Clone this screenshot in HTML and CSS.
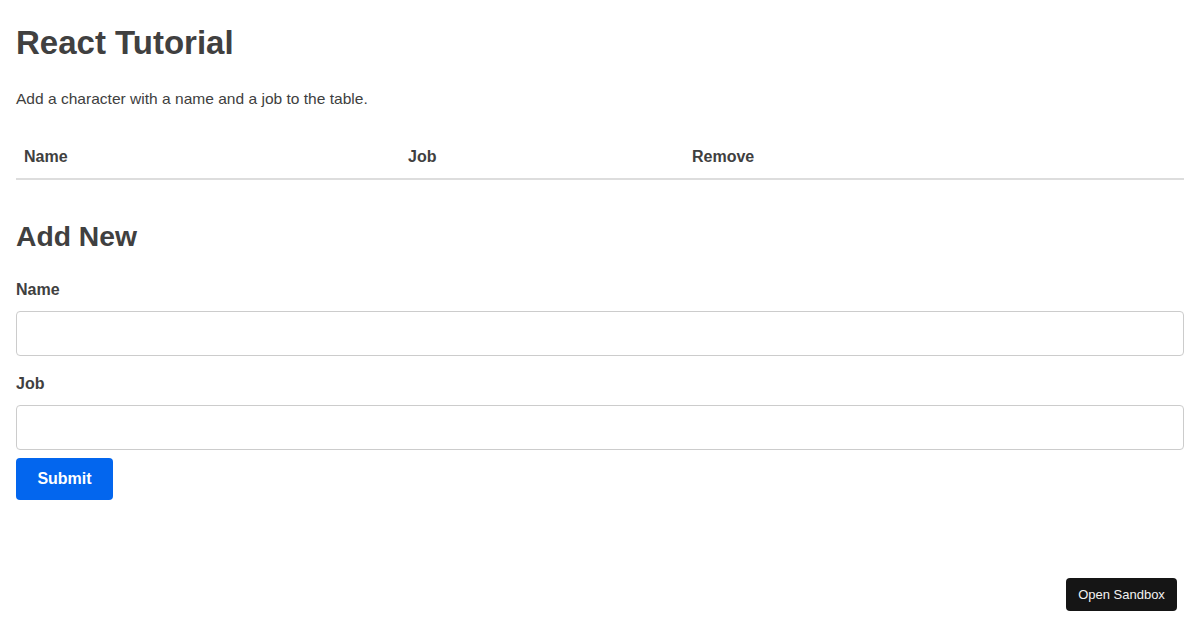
FILE: index.html
```html
<!DOCTYPE html>
<html lang="en">
<head>
    <meta charset="UTF-8">
    <title>React Tutorial</title>
    <meta name="viewport" content="width=device-width, initial-scale=1.0">
    <link rel="stylesheet" href="styles.css">
</head>
<body>
<div class="container">
    <h1>React Tutorial</h1>
    <p>Add a character with a name and a job to the table.</p>
    <table>
        <thead>
        <tr>
            <th class="col-name">Name</th>
            <th class="col-job">Job</th>
            <th class="col-remove">Remove</th>
        </tr>
        </thead>
        <tbody></tbody>
    </table>

    <h2>Add New</h2>
    <form id="characterForm">
        <label for="name">Name</label>
        <input type="text" id="name" name="name" />
        <label for="job">Job</label>
        <input type="text" id="job" name="job" class="last-field" />
        <input type="submit" value="Submit" />
    </form>
</div>

<button class="sandbox-link">Open Sandbox</button>
</body>
</html>
```

FILE: styles.css
```css
body {
    font-family: "Liberation Sans", Arial, sans-serif;
    color: #404040;
    background-color: #fff;
    margin: 0;
    font-size: 16px;
    line-height: 1.5;
}
.container {
    padding: 0 16px;
}
h1 {
    font-size: 33px;
    line-height: 38px;
    margin: 24px 0 25px;
}
p {
    font-size: 15.55px;
    line-height: 24px;
    margin: 0 0 26px;
}
table {
    width: 100%;
    border-collapse: collapse;
}
th {
    text-align: left;
    padding: 8px 8px 9px;
    border-bottom: 2px solid #ddd;
}
.col-name {
    width: 368px;
}
.col-job {
    width: 268px;
}
h2 {
    font-size: 28.3px;
    line-height: 34px;
    margin: 39px 0 25px;
}
form {
    display: flex;
    flex-direction: column;
}
label {
    font-weight: bold;
    margin-bottom: 9px;
}
input[type="text"] {
    height: 45px;
    padding: 8px;
    margin-bottom: 16px;
    border: 1px solid #ccc;
    border-radius: 4px;
    box-sizing: border-box;
    font-size: 16px;
    font-family: inherit;
}
input.last-field {
    margin-bottom: 8px;
}
input[type="submit"] {
    align-self: flex-start;
    background-color: #0366ee;
    color: white;
    width: 97px;
    height: 42px;
    padding: 0;
    border: none;
    border-radius: 4px;
    cursor: pointer;
    font-size: 16px;
    font-weight: bold;
    font-family: inherit;
}
.sandbox-link {
    position: fixed;
    right: 23px;
    bottom: 19px;
    width: 111px;
    height: 33px;
    background: #151515;
    color: #f2f2f2;
    border: none;
    border-radius: 4px;
    font-family: "Liberation Sans", Arial, sans-serif;
    font-size: 13px;
    padding: 0;
    cursor: pointer;
}
```
